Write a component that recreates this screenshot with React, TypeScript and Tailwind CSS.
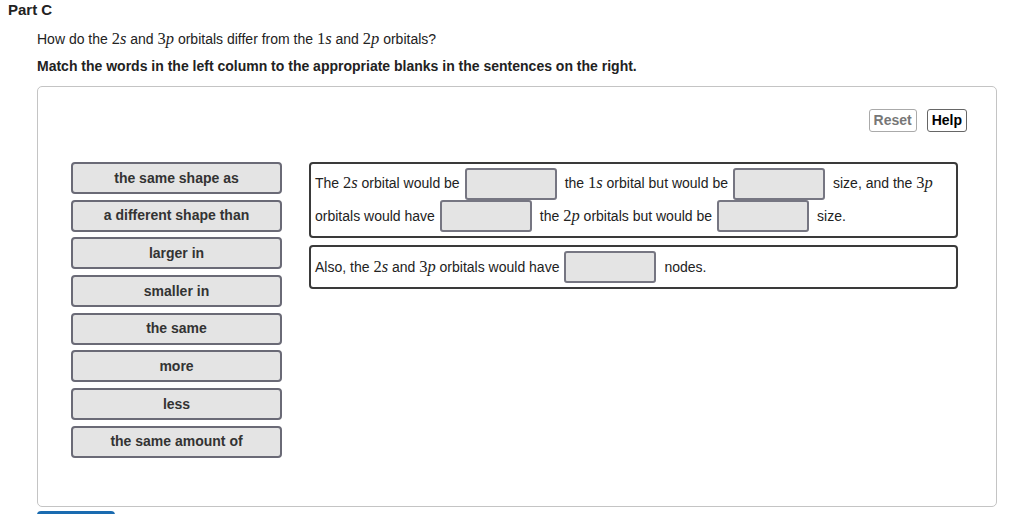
const M = ({ n, v }: { n: string; v: string }) => (
  <span className="font-['Liberation_Serif',serif] text-[16.5px]">
    {n}
    <i>{v}</i>
  </span>
);

const Drop = ({ cls = '' }: { cls?: string }) => (
  <span
    className={`inline-block align-middle w-[92px] h-[32px] rounded-[3px] border-2 border-[#767682] bg-[#e4e4e4] ${cls}`}
  />
);

const words = [
  'the same shape as',
  'a different shape than',
  'larger in',
  'smaller in',
  'the same',
  'more',
  'less',
  'the same amount of',
];

export default function App() {
  return (
    <div className="relative h-[514px] overflow-hidden bg-white font-['Liberation_Sans',Arial,sans-serif] text-[#222]">
      <h2 className="pl-[8px] pt-[1px] text-[15px] font-bold leading-[17px]">Part C</h2>
      <p className="ml-[37px] mt-[12px] text-[14px] leading-[17px]">
        How do the <M n="2" v="s" /> and <M n="3" v="p" /> orbitals differ from the <M n="1" v="s" /> and{' '}
        <M n="2" v="p" /> orbitals?
      </p>
      <p className="ml-[37px] mt-[10px] text-[14px] font-bold leading-[17px]">
        Match the words in the left column to the appropriate blanks in the sentences on the right.
      </p>

      <div className="ml-[37px] mt-[11px] w-[960px] h-[421px] rounded-[5px] border border-[#c4c4c4]">
        <div className="flex justify-end gap-[10px] pr-[29px] pt-[22px]">
          <button className="h-[23px] px-[4px] rounded-[3px] border border-[#aaa] text-[14px] font-bold text-[#777]">
            Reset
          </button>
          <button className="h-[23px] px-[4px] rounded-[3px] border border-[#666] text-[14px] font-bold text-black">
            Help
          </button>
        </div>

        <div className="mt-[30px] flex pl-[33px]">
          <div className="flex w-[211px] flex-col gap-[5.7px]">
            {words.map((w) => (
              <div
                key={w}
                className="flex h-[32px] items-center justify-center rounded-[4px] border-2 border-[#6a6a76] bg-[#e4e4e4] text-[14px] font-bold text-[#333]"
              >
                {w}
              </div>
            ))}
          </div>

          <div className="ml-[27px] flex w-[649px] flex-col gap-[7px]">
            <div className="rounded-[4px] border-2 border-[#3a3a3a] px-[4px] pt-[3px] pb-[4px] text-[14px] text-[#222]">
              <div className="flex h-[33px] items-center whitespace-nowrap">
                <span>
                  The <M n="2" v="s" /> orbital would be
                </span>
                <Drop cls="ml-[5px] mr-[8px]" />
                <span>
                  the <M n="1" v="s" /> orbital but would be
                </span>
                <Drop cls="ml-[5px] mr-[8px]" />
                <span>
                  size, and the <M n="3" v="p" />
                </span>
              </div>
              <div className="flex h-[32px] items-center whitespace-nowrap">
                <span>orbitals would have</span>
                <Drop cls="ml-[5px] mr-[8px]" />
                <span>
                  the <M n="2" v="p" /> orbitals but would be
                </span>
                <Drop cls="ml-[5px] mr-[8px]" />
                <span>size.</span>
              </div>
            </div>
            <div className="rounded-[4px] border-2 border-[#3a3a3a] px-[4px] py-[3.5px] text-[14px] text-[#222]">
              <div className="flex h-[33px] items-center whitespace-nowrap">
                <span>
                  Also, the <M n="2" v="s" /> and <M n="3" v="p" /> orbitals would have
                </span>
                <Drop cls="ml-[5px] mr-[8px]" />
                <span>nodes.</span>
              </div>
            </div>
          </div>
        </div>
      </div>

      <div className="ml-[37px] mt-[4px] h-[10px] w-[78px] rounded-t-[4px] bg-[#1a6bb0]" />
    </div>
  );
}
